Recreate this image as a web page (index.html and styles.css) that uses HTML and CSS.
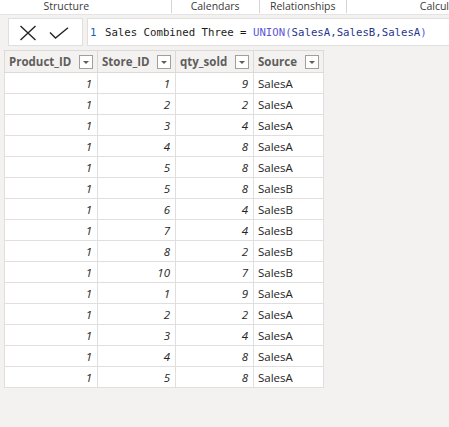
FILE: index.html
```html
<!DOCTYPE html>
<html>
<head>
<meta charset="utf-8">
<link rel="stylesheet" href="styles.css">
</head>
<body>
<div class="ribbon">
  <div class="group g1">Structure</div>
  <div class="group g2">Calendars</div>
  <div class="group g3">Relationships</div>
  <div class="group g4">Calcul</div>
</div>
<div class="formula">
  <div class="actions">
    <svg class="ico-x" width="18" height="16" viewBox="0 0 18 16"><path d="M1.5 1 L16.5 15 M16.5 1 L1.5 15" stroke="#252423" stroke-width="1.4" fill="none"/></svg>
    <svg class="ico-check" width="20" height="12" viewBox="0 0 20 12"><path d="M1 5.5 L6.5 11 L19 0.8" stroke="#252423" stroke-width="1.4" fill="none"/></svg>
  </div>
  <div class="expr"><span class="ln">1</span><span class="code">Sales Combined Three = <span class="fn">UNION(</span><span class="tbl">SalesA,SalesB,SalesA</span><span class="fn">)</span></span></div>
</div>
<table class="grid">
  <colgroup><col class="c1"><col class="c2"><col class="c3"><col class="c4"></colgroup>
  <thead>
    <tr>
      <th><div class="hd"><span>Product_ID</span><i class="flt"></i></div></th>
      <th><div class="hd"><span>Store_ID</span><i class="flt"></i></div></th>
      <th><div class="hd"><span>qty_sold</span><i class="flt"></i></div></th>
      <th><div class="hd"><span>Source</span><i class="flt"></i></div></th>
    </tr>
  </thead>
  <tbody>
    <tr><td class="n">1</td><td class="n">1</td><td class="n">9</td><td>SalesA</td></tr>
    <tr><td class="n">1</td><td class="n">2</td><td class="n">2</td><td>SalesA</td></tr>
    <tr><td class="n">1</td><td class="n">3</td><td class="n">4</td><td>SalesA</td></tr>
    <tr><td class="n">1</td><td class="n">4</td><td class="n">8</td><td>SalesA</td></tr>
    <tr><td class="n">1</td><td class="n">5</td><td class="n">8</td><td>SalesA</td></tr>
    <tr><td class="n">1</td><td class="n">5</td><td class="n">8</td><td>SalesB</td></tr>
    <tr><td class="n">1</td><td class="n">6</td><td class="n">4</td><td>SalesB</td></tr>
    <tr><td class="n">1</td><td class="n">7</td><td class="n">4</td><td>SalesB</td></tr>
    <tr><td class="n">1</td><td class="n">8</td><td class="n">2</td><td>SalesB</td></tr>
    <tr><td class="n">1</td><td class="n">10</td><td class="n">7</td><td>SalesB</td></tr>
    <tr><td class="n">1</td><td class="n">1</td><td class="n">9</td><td>SalesA</td></tr>
    <tr><td class="n">1</td><td class="n">2</td><td class="n">2</td><td>SalesA</td></tr>
    <tr><td class="n">1</td><td class="n">3</td><td class="n">4</td><td>SalesA</td></tr>
    <tr><td class="n">1</td><td class="n">4</td><td class="n">8</td><td>SalesA</td></tr>
    <tr><td class="n">1</td><td class="n">5</td><td class="n">8</td><td>SalesA</td></tr>
  </tbody>
</table>
</body>
</html>
```
FILE: styles.css
```css
* { box-sizing: border-box; }
html, body { margin: 0; padding: 0; }
body {
  background: #f3f2f1;
  font-family: "Open Sans", "Noto Sans", sans-serif;
  color: #252423;
  width: 449px;
  height: 427px;
  overflow: hidden;
}
.ribbon {
  display: flex;
  height: 15px;
  background: #ffffff;
  border-bottom: 1px solid #e6e4e2;
  font-size: 10.5px;
  color: #3b3a39;
  white-space: nowrap;
  overflow: hidden;
}
.group {
  text-align: center;
  line-height: 13px;
  height: 13px;
  border-right: 1px solid #d6d4d2;
}
.g1 { width: 173px; padding-right: 38px; }
.g2 { width: 89px; }
.g3 { width: 88px; }
.g4 { flex: 1; border-right: none; text-align: left; padding-left: 73px; }
.formula {
  display: flex;
  gap: 4px;
  margin: 3px 0 0 8px;
  height: 28px;
}
.actions {
  width: 75px;
  flex: none;
  background: #ffffff;
  border: 1px solid #e1dfdd;
  display: flex;
  align-items: center;
  padding-left: 10px;
  gap: 12px;
}
.ico-x { margin-top: 1px; }
.ico-check { margin-top: 1px; }
.expr {
  flex: 1;
  background: #ffffff;
  border: 1px solid #e1dfdd;
  border-right: none;
  display: flex;
  align-items: center;
  font-family: "DejaVu Sans Mono", "Liberation Mono", monospace;
  font-size: 10.7px;
  white-space: nowrap;
  overflow: hidden;
}
.ln { color: #1a5fb4; width: 17px; padding-left: 2px; flex: none; }
.code { color: #1b1b1b; }
.fn { color: #5a58d6; }
.tbl { color: #27368c; }
.grid {
  margin: 4px 0 0 4px;
  border-collapse: collapse;
  table-layout: fixed;
  width: 319px;
  border: 1px solid #dcdad8;
}
.c1 { width: 93px; }
.c2 { width: 78px; }
.c3 { width: 78px; }
.c4 { width: 70px; }
th {
  height: 22px;
  padding: 0 4px 0 4px;
  border: 1px solid #dcdad8;
  background: #f3f2f1;
  font-weight: 700;
  font-size: 11.5px;
  color: #605e5c;
  text-align: left;
}
.hd {
  display: flex;
  align-items: center;
  justify-content: space-between;
}
.flt {
  width: 14px;
  height: 14px;
  background: #ffffff;
  border: 1px solid #a19f9d;
  position: relative;
  flex: none;
}
.flt::after {
  content: "";
  position: absolute;
  left: 3px;
  top: 5px;
  border-left: 3px solid transparent;
  border-right: 3px solid transparent;
  border-top: 3px solid #605e5c;
}
td {
  height: 21px;
  padding: 0 5px 0 4px;
  border: 1px solid #e1dfdd;
  background: #ffffff;
  font-size: 11.5px;
  color: #252423;
  white-space: nowrap;
}
td.n {
  text-align: right;
  font-style: italic;
}
```
